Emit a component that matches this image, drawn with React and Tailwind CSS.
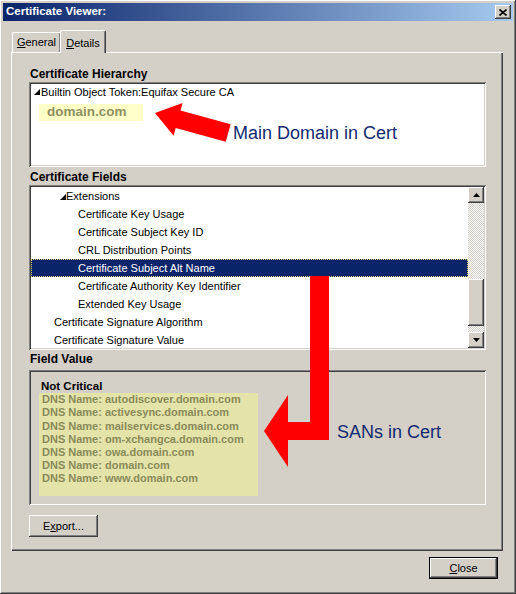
import React from 'react';

const raised = 'shadow-[inset_-1px_-1px_#404040,inset_1px_1px_#ffffff,inset_-2px_-2px_#808080,inset_2px_2px_#d4d0c8]';
const sunken = 'shadow-[inset_1px_1px_#808080,inset_-1px_-1px_#ffffff,inset_2px_2px_#404040,inset_-2px_-2px_#d4d0c8]';

const Tri = ({ className = '' }) => (
  <svg width="6" height="6" viewBox="0 0 6 6" className={className}>
    <polygon points="6,0 6,6 0,6" fill="#000" />
  </svg>
);

const fields = [
  { label: 'Extensions', indent: 'pl-[29px]', tri: true },
  { label: 'Certificate Key Usage', indent: 'pl-[47px]' },
  { label: 'Certificate Subject Key ID', indent: 'pl-[47px]' },
  { label: 'CRL Distribution Points', indent: 'pl-[47px]' },
  { label: 'Certificate Subject Alt Name', indent: 'pl-[47px]', selected: true },
  { label: 'Certificate Authority Key Identifier', indent: 'pl-[47px]' },
  { label: 'Extended Key Usage', indent: 'pl-[47px]' },
  { label: 'Certificate Signature Algorithm', indent: 'pl-[23px]' },
  { label: 'Certificate Signature Value', indent: 'pl-[23px]' },
];

const dns = [
  'autodiscover.domain.com',
  'activesync.domain.com',
  'mailservices.domain.com',
  'om-xchangca.domain.com',
  'owa.domain.com',
  'domain.com',
  'www.domain.com',
];

function ScrollBtn({ up }) {
  return (
    <div className={`w-[16px] h-[16px] bg-[#d4d0c8] ${raised} flex items-center justify-center`}>
      <svg width="7" height="4" viewBox="0 0 7 4">
        {up ? <polygon points="3.5,0 7,4 0,4" fill="#000" /> : <polygon points="0,0 7,0 3.5,4" fill="#000" />}
      </svg>
    </div>
  );
}

export default function App() {
  return (
    <div
      className={`relative w-[516px] h-[594px] bg-[#d4d0c8] p-[3px] text-[11px] text-black overflow-hidden ${raised}`}
      style={{ fontFamily: '"Liberation Sans", Arial, sans-serif' }}
    >
      {/* title bar */}
      <div className="h-[18px] w-[510px] flex items-center justify-between pl-[3px] pr-[2px] bg-[linear-gradient(to_right,#0a246a,#a6caf0)]">
        <span className="text-white font-bold text-[11.5px]">Certificate Viewer:</span>
        <div className={`w-[16px] h-[14px] bg-[#d4d0c8] ${raised} flex items-center justify-center`}>
          <svg width="8" height="7" viewBox="0 0 8 7">
            <path d="M0.5 0.5 L7.5 6.5 M7.5 0.5 L0.5 6.5" stroke="#000" strokeWidth="1.6" />
          </svg>
        </div>
      </div>

      <div className="pl-[8px] pt-[9px]">
        {/* tabs */}
        <div className="flex h-[22px] items-start">
          <div className="mt-[2px] ml-[1px] h-[20px] w-[49px] flex items-center justify-center rounded-t-[2px] border-t border-l border-white shadow-[inset_-1px_0_#808080] border-r border-r-[#404040]">
            <span><span className="underline">G</span>eneral</span>
          </div>
          <div className="relative z-10 h-[23px] w-[46px] -ml-[1px] bg-[#d4d0c8] flex items-start pt-[4px] justify-center rounded-t-[2px] border-t border-l border-white border-r border-r-[#404040] shadow-[inset_-1px_0_#808080]">
            <span><span className="underline">D</span>etails</span>
          </div>
        </div>

        {/* panel */}
        <div className="w-[492px] h-[499px] pl-[18px] pt-[14px] shadow-[inset_1px_1px_#ffffff,inset_-1px_-1px_#404040,inset_-2px_-2px_#808080]">
          <div className="h-[16px] leading-[16px] pl-[1px] font-bold text-[12px]">Certificate Hierarchy</div>
          <div className={`w-[457px] h-[85px] bg-white p-[2px] ${sunken}`}>
            <div className="h-[16px] flex items-center pl-[3px]">
              <Tri className="mr-[1px]" />
              <span>Builtin Object Token:Equifax Secure CA</span>
            </div>
            <div className="mt-[4px] ml-[8px] w-[104px] h-[17px] bg-[#ffffc8] flex items-center pl-[8px]">
              <span className="font-bold text-[13.5px] text-[#8f8f60]">domain.com</span>
            </div>
          </div>

          <div className="mt-[2px] h-[16px] leading-[16px] pl-[1px] font-bold text-[12px]">Certificate Fields</div>
          <div className={`w-[457px] h-[165px] bg-white p-[2px] flex overflow-hidden ${sunken}`}>
            <div className="flex-1 overflow-hidden">
              {fields.map((f) => (
                <div
                  key={f.label}
                  className={`h-[18px] pt-[1px] flex items-center ${f.indent} ${
                    f.selected ? 'bg-[#0a246a] text-white outline-1 outline-dotted -outline-offset-1 outline-[#e8d870]' : ''
                  }`}
                >
                  {f.tri && <Tri />}
                  <span>{f.label}</span>
                </div>
              ))}
            </div>
            <div className="w-[16px] flex flex-col">
              <ScrollBtn up />
              <div className="h-[76px] bg-[repeating-conic-gradient(#d4d0c8_0%_25%,#ffffff_0%_50%)] bg-[length:2px_2px]" />
              <div className={`h-[47px] bg-[#d4d0c8] ${raised}`} />
              <div className="h-[6px] bg-[repeating-conic-gradient(#d4d0c8_0%_25%,#ffffff_0%_50%)] bg-[length:2px_2px]" />
              <ScrollBtn />
            </div>
          </div>

          <div className="mt-[1px] h-[17px] leading-[17px] pl-[1px] font-bold text-[12px]">Field Value</div>
          <div className={`mt-[2px] w-[457px] h-[135px] pl-[10px] pt-[10px] ${sunken}`}>
            <div className="pl-[2px] leading-[13.2px] font-bold text-[11.5px]">Not Critical</div>
            <div className="w-[219px] bg-[#e4e4aa] pl-[3px] pb-[10px]">
              {dns.map((d) => (
                <div key={d} className="leading-[13.2px] font-bold text-[11px] text-[#8a8a58]">
                  DNS Name: {d}
                </div>
              ))}
            </div>
          </div>

          <button className={`mt-[10px] w-[69px] h-[22px] bg-[#d4d0c8] flex items-center justify-center ${raised}`}>
            <span>E<span className="underline">x</span>port...</span>
          </button>
        </div>
      </div>

      {/* bottom buttons */}
      <div className="flex justify-end pr-[15px] mt-[6px]">
        <button className="w-[69px] h-[22px] border border-black bg-[#d4d0c8]">
          <div className={`w-full h-full flex items-center justify-center ${raised}`}>
            <span><span className="underline">C</span>lose</span>
          </div>
        </button>
      </div>

      {/* annotation overlay */}
      <svg className="absolute inset-0 pointer-events-none" width="516" height="594" viewBox="0 0 516 594">
        <polygon
          points="155,113 182.6,102.9 180.5,110.6 230.6,124.3 225.8,141.7 175.7,128 173.6,135.7"
          fill="#ff0000"
        />
        <polygon
          points="310,276 329,276 329,440 288,440 288,467 264,431 288,395 288,422 310,422"
          fill="#ff0000"
        />
      </svg>
      <div className="absolute left-[233px] top-[122px] text-[18px] leading-[22px] text-[#132a6e] whitespace-nowrap">
        Main Domain in Cert
      </div>
      <div className="absolute left-[337px] top-[421px] text-[18px] leading-[22px] text-[#132a6e] whitespace-nowrap">
        SANs in Cert
      </div>
    </div>
  );
}
